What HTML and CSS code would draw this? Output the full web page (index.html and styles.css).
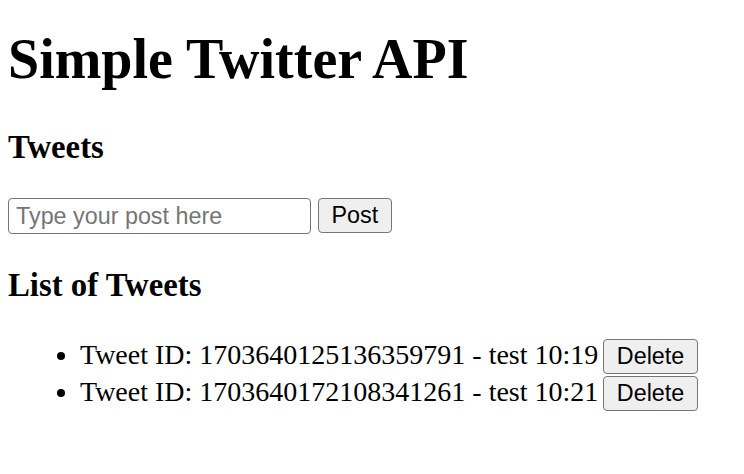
FILE: index.html
```html
<!DOCTYPE html>
<html>
<head>
<meta charset="utf-8">
<title>Simple Twitter API</title>
<link rel="stylesheet" href="styles.css">
</head>
<body>
<h1 class="title">Simple Twitter API</h1>
<h3 class="section">Tweets</h3>
<form class="post-form">
<input class="post-input" type="text" placeholder="Type your post here"><button class="btn" type="button">Post</button>
</form>
<h3 class="section">List of Tweets</h3>
<ul class="tweets">
<li class="tweet">Tweet ID: 1703640125136359791 - test 10:19 <button class="btn" type="button">Delete</button></li>
<li class="tweet">Tweet ID: 1703640172108341261 - test 10:21 <button class="btn" type="button">Delete</button></li>
</ul>
</body>
</html>
```
FILE: styles.css
```css
html, body {
  background: #ffffff;
}
body {
  margin: 8px;
  font-family: "Liberation Serif", "Times New Roman", serif;
  font-size: 28px;
  color: #000;
}
.title {
  font-size: 56px;
  font-weight: bold;
  margin: 19px 0 37.5px;
}
.section {
  font-size: 32.76px;
  font-weight: bold;
  margin: 32.76px 0;
}
.post-form {
  margin: 0;
  display: flex;
  align-items: flex-start;
  gap: 7px;
}
.post-input {
  font-family: "Liberation Sans", Arial, sans-serif;
  font-size: 23.33px;
  width: 303px;
  height: 36px;
  padding: 0 7px;
  border: 1px solid #767676;
  border-radius: 4px;
  box-sizing: border-box;
  margin: 0;
  color: #000;
}
.post-input::placeholder {
  color: #757575;
}
.btn {
  font-family: "Liberation Sans", Arial, sans-serif;
  font-size: 23.33px;
  height: 35px;
  box-sizing: border-box;
  padding: 0 12.5px;
  border: 1px solid #767676;
  border-radius: 4px;
  background: #efefef;
  color: #000;
  margin: 0;
}
.tweets {
  margin: 25px 0 28px;
  padding-left: 72px;
}
.tweet {
  line-height: 36px;
}
.tweet .btn {
  margin-left: -2px;
}
```
